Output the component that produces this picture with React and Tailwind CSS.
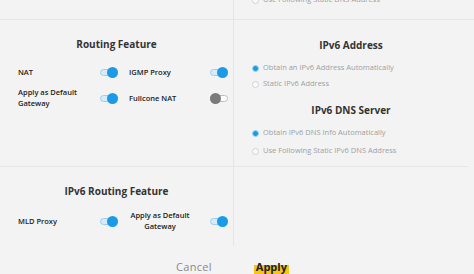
import React from "react";

const font = { fontFamily: '"Open Sans", "Liberation Sans", sans-serif' };

function Toggle({ on = true }) {
  return (
    <div className="relative w-[18px] h-[11px] flex items-center shrink-0">
      <div
        className={
          on
            ? "w-[18px] h-[7px] rounded-full bg-[#d7ecf9] border border-[#9fcdeb]"
            : "w-[18px] h-[7px] rounded-full bg-[#ffffff] border border-[#bdbdbd]"
        }
      />
      <div
        className={
          on
            ? "absolute right-0 top-0 w-[11px] h-[11px] rounded-full bg-[#1b9be6]"
            : "absolute left-0 top-0 w-[11px] h-[11px] rounded-full bg-[#7a7a7a]"
        }
      />
    </div>
  );
}

function Radio({ checked, label }) {
  return (
    <div className="flex items-center h-[10px] pl-[252px]">
      {checked ? (
        <div className="w-[7px] h-[7px] rounded-full border border-[#a8d4f1] bg-[#1b9be6] shrink-0" />
      ) : (
        <div className="w-[7px] h-[7px] rounded-full border border-[#d2d2d2] bg-[#fafafa] shrink-0" />
      )}
      <span className="ml-[4px] text-[7.5px] leading-none text-[#a0a0a0] whitespace-nowrap">{label}</span>
    </div>
  );
}

export default function App() {
  return (
    <div className="w-[474px] h-[274px] overflow-hidden bg-[#f3f3f3] text-[#222]" style={font}>
      <div className="grid grid-cols-[234px_1fr] h-[246px]">
        {/* Left column */}
        <div className="flex flex-col border-r border-[#e4e4e4]">
          <div className="h-[20px] border-b border-[#e6e6e6]" />
          <div className="h-[147px] border-b border-[#e6e6e6] flex flex-col">
            <div className="mt-[17px] h-[14px] text-center text-[10px] font-bold leading-[14px] text-[#333]">Routing Feature</div>
            <div className="mt-[15px] flex items-center pl-[18px] h-[12px]">
              <span className="w-[82px] text-[7.5px] font-semibold leading-[10px]">NAT</span>
              <Toggle />
              <span className="ml-[11px] w-[81px] text-[7.5px] font-semibold leading-[10px]">IGMP Proxy</span>
              <Toggle />
            </div>
            <div className="mt-[8px] flex items-center pl-[18px] h-[24px]">
              <span className="w-[82px] text-[7.5px] font-semibold leading-[11px]">Apply as Default<br />Gateway</span>
              <Toggle />
              <span className="ml-[11px] w-[81px] text-[7.5px] font-semibold leading-[10px]">Fullcone NAT</span>
              <Toggle on={false} />
            </div>
          </div>
          <div className="flex-1 flex flex-col">
            <div className="mt-[17px] h-[14px] text-center text-[10px] font-bold leading-[14px] text-[#333]">IPv6 Routing Feature</div>
            <div className="mt-[11px] flex items-center pl-[18px] h-[24px]">
              <span className="w-[82px] text-[7.5px] font-semibold leading-[10px]">MLD Proxy</span>
              <Toggle />
              <span className="w-[84px] text-center text-[7.5px] font-semibold leading-[11px]">Apply as Default<br />Gateway</span>
              <span className="w-[8px]" />
              <Toggle />
            </div>
          </div>
        </div>
        {/* Right column */}
        <div className="flex flex-col">
          <div className="h-[20px] border-b border-[#e6e6e6] overflow-hidden">
            <div className="-mt-[5px] -ml-[234px]">
              <Radio checked={false} label="Use Following Static DNS Address" />
            </div>
          </div>
          <div className="h-[147px] mr-[6px] border-b border-[#e6e6e6] flex flex-col -ml-[234px] pl-[234px]">
            <div className="mt-[18px] h-[14px] text-center text-[10px] font-bold leading-[14px] text-[#333]">IPv6 Address</div>
            <div className="-ml-[234px] mt-[11px] flex flex-col gap-[6px]">
              <Radio checked label="Obtain an IPv6 Address Automatically" />
              <Radio checked={false} label="Static IPv6 Address" />
            </div>
            <div className="mt-[14px] h-[14px] text-center text-[10px] font-bold leading-[14px] text-[#333]">IPv6 DNS Server</div>
            <div className="-ml-[234px] mt-[11px] flex flex-col gap-[8px]">
              <Radio checked label="Obtain IPv6 DNS Info Automatically" />
              <Radio checked={false} label="Use Following Static IPv6 DNS Address" />
            </div>
          </div>
        </div>
      </div>
      <div className="flex items-start h-[28px] pt-[14px]">
        <span className="ml-[176px] text-[11px] leading-[14px] text-[#8a8a8a] tracking-[0.3px]">Cancel</span>
        <span className="ml-[44px] relative text-[11px] leading-[14px] font-bold text-[#222]">
          <span className="absolute left-[-2px] right-[-2px] top-[5px] h-[12px] bg-[#f5c518]" />
          <span className="relative">Apply</span>
        </span>
      </div>
    </div>
  );
}
